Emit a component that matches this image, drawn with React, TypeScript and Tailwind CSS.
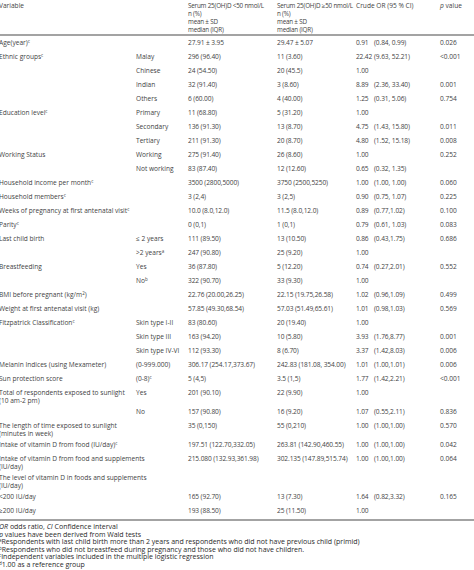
import React from "react";

type Row = {
  v?: React.ReactNode;
  s?: React.ReactNode;
  a?: string;
  b?: string;
  or?: string;
  ci?: string;
  p?: string;
  tall?: boolean;
};

const S = ({ children }: { children: React.ReactNode }) => (
  <sup className="text-[4.5px]">{children}</sup>
);

const rows: Row[] = [
  { v: <>Age(year)<S>c</S></>, a: "27.91 ± 3.95", b: "29.47 ± 5.07", or: "0.91", ci: "(0.84, 0.99)", p: "0.026" },
  { v: <>Ethnic groups<S>c</S></>, s: "Malay", a: "296 (96.40)", b: "11 (3.60)", or: "22.42", ci: "(9.63, 52.21)", p: "<0.001" },
  { s: "Chinese", a: "24 (54.50)", b: "20 (45.5)", or: "1.00" },
  { s: "Indian", a: "32 (91.40)", b: "3 (8.60)", or: "8.89", ci: "(2.36, 33.40)", p: "0.001" },
  { s: "Others", a: "6 (60.00)", b: "4 (40.00)", or: "1.25", ci: "(0.31, 5.06)", p: "0.754" },
  { v: <>Education level<S>c</S></>, s: "Primary", a: "11 (68.80)", b: "5 (31.20)", or: "1.00" },
  { s: "Secondary", a: "136 (91.30)", b: "13 (8.70)", or: "4.75", ci: "(1.43, 15.80)", p: "0.011" },
  { s: "Tertiary", a: "211 (91.30)", b: "20 (8.70)", or: "4.80", ci: "(1.52, 15.18)", p: "0.008" },
  { v: "Working Status", s: "Working", a: "275 (91.40)", b: "26 (8.60)", or: "1.00", p: "0.252" },
  { s: "Not working", a: "83 (87.40)", b: "12 (12.60)", or: "0.65", ci: "(0.32, 1.35)" },
  { v: <>Household income per month<S>c</S></>, a: "3500 (2800,5000)", b: "3750 (2500,5250)", or: "1.00", ci: "(1.00, 1.00)", p: "0.060" },
  { v: <>Household members<S>c</S></>, a: "3 (2,4)", b: "3 (2,5)", or: "0.90", ci: "(0.75, 1.07)", p: "0.225" },
  { v: <>Weeks of pregnancy at first antenatal visit<S>c</S></>, a: "10.0 (8.0,12.0)", b: "11.5 (8.0,12.0)", or: "0.89", ci: "(0.77,1.02)", p: "0.100" },
  { v: <>Parity<S>c</S></>, a: "0 (0,1)", b: "1 (0,1)", or: "0.79", ci: "(0.61, 1.03)", p: "0.083" },
  { v: "Last child birth", s: "≤ 2 years", a: "111 (89.50)", b: "13 (10.50)", or: "0.86", ci: "(0.43,1.75)", p: "0.686" },
  { s: <>&gt;2 years<S>a</S></>, a: "247 (90.80)", b: "25 (9.20)", or: "1.00" },
  { v: "Breastfeeding", s: "Yes", a: "36 (87.80)", b: "5 (12.20)", or: "0.74", ci: "(0.27,2.01)", p: "0.552" },
  { s: <>No<S>b</S></>, a: "322 (90.70)", b: "33 (9.30)", or: "1.00" },
  { v: <>BMI before pregnant (kg/m<S>2</S>)</>, a: "22.76 (20.00,26.25)", b: "22.15 (19.75,26.58)", or: "1.02", ci: "(0.96,1.09)", p: "0.499" },
  { v: "Weight at first antenatal visit (kg)", a: "57.85 (49.30,68.54)", b: "57.03 (51.49,65.61)", or: "1.01", ci: "(0.98,1.03)", p: "0.569" },
  { v: <>Fitzpatrick Classification<S>c</S></>, s: "Skin type I-II", a: "83 (80.60)", b: "20 (19.40)", or: "1.00" },
  { s: "Skin type III", a: "163 (94.20)", b: "10 (5.80)", or: "3.93", ci: "(1.76,8.77)", p: "0.001" },
  { s: "Skin type IV-VI", a: "112 (93.30)", b: "8 (6.70)", or: "3.37", ci: "(1.42,8.03)", p: "0.006" },
  { v: "Melanin Indices (using Mexameter)", s: "(0-999.000)", a: "306.17 (254.17,373.67)", b: "242.83 (181.08, 354.00)", or: "1.01", ci: "(1.00,1.01)", p: "0.006" },
  { v: "Sun protection score", s: <>(0-8)<S>c</S></>, a: "5 (4,5)", b: "3.5 (1,5)", or: "1.77", ci: "(1.42,2.21)", p: "<0.001" },
  { v: <>Total of respondents exposed to sunlight<br />(10 am-2 pm)</>, s: "Yes", a: "201 (90.10)", b: "22 (9.90)", or: "1.00", tall: true },
  { s: "No", a: "157 (90.80)", b: "16 (9.20)", or: "1.07", ci: "(0.55,2.11)", p: "0.836" },
  { v: <>The length of time exposed to sunlight<br />(minutes in week)</>, a: "35 (0,150)", b: "55 (0,210)", or: "1.00", ci: "(1.00,1.00)", p: "0.570", tall: true },
  { v: <>Intake of vitamin D from food (IU/day)<S>c</S></>, a: "197.51 (122.70,332.05)", b: "263.81 (142.90,460.55)", or: "1.00", ci: "(1.00,1.00)", p: "0.042" },
  { v: <>Intake of vitamin D from food and supplements<br />(IU/day)</>, a: "215.080 (132.93,361.98)", b: "302.135 (147.89,515.74)", or: "1.00", ci: "(1.00,1.00)", p: "0.064", tall: true },
  { v: <>The level of vitamin D in foods and supplements<br />(IU/day)</>, tall: true },
  { v: "<200 IU/day", a: "165 (92.70)", b: "13 (7.30)", or: "1.64", ci: "(0.82,3.32)", p: "0.165" },
  { v: "≥200 IU/day", a: "193 (88.50)", b: "25 (11.50)", or: "1.00" },
];

const grid = "grid grid-cols-[137px_52px_89px_79px_18px_66px_1fr]";

export default function App() {
  return (
    <div className="w-[474px] h-[570px] overflow-hidden bg-white font-['Open_Sans',sans-serif] text-[6.6px] leading-[8px] text-[#3f3f3f]">
      <div className="-ml-[1px]">
        <div className={`${grid} h-[36px] pt-[2px] border-b-2 border-[#a3a3a3] whitespace-nowrap`}>
          <div className="col-span-2">Variable</div>
          <div className="text-[6.3px] tracking-[-0.2px]">
            Serum 25(OH)D &lt;50 nmol/L
            <br />n (%)
            <br />mean ± SD
            <br />median (IQR)
          </div>
          <div className="text-[6.3px] tracking-[-0.2px]">
            Serum 25(OH)D ≥50 nmol/L
            <br />n (%)
            <br />mean ± SD
            <br />median (IQR)
          </div>
          <div className="col-span-2">Crude OR (95 % CI)</div>
          <div>
            <i>p</i> value
          </div>
        </div>
        {rows.map((r, i) => (
          <div
            key={i}
            className={`${grid} ${r.tall ? "h-[19px]" : "h-[14px]"} pt-[3px] whitespace-nowrap`}
          >
            {r.s === undefined ? (
              <div className="col-span-2">{r.v}</div>
            ) : (
              <>
                <div>{r.v}</div>
                <div>{r.s}</div>
              </>
            )}
            <div className="tracking-[-0.1px]">{r.a}</div>
            <div className="tracking-[-0.1px]">{r.b}</div>
            <div className="tracking-[-0.15px]">{r.or}</div>
            <div className="tracking-[-0.1px]">{r.ci}</div>
            <div>{r.p}</div>
          </div>
        ))}
        <div className="border-t-2 border-[#a3a3a3] mt-[1px] pt-[2px] text-[7px] leading-[7.6px] text-[#2a2a2a] font-medium whitespace-nowrap">
          <div>
            <i>OR</i> odds ratio, <i>CI</i> Confidence interval
          </div>
          <div>
            <i>p</i> values have been derived from Wald tests
          </div>
          <div>
            <S>a</S>Respondents with last child birth more than 2 years and respondents who did not have previous child (primid)
          </div>
          <div>
            <S>b</S>Respondents who did not breastfeed during pregnancy and those who did not have children.
          </div>
          <div>
            <S>c</S>Independent variables included in the multiple logistic regression
          </div>
          <div>
            <S>d</S>1.00 as a reference group
          </div>
        </div>
      </div>
    </div>
  );
}
